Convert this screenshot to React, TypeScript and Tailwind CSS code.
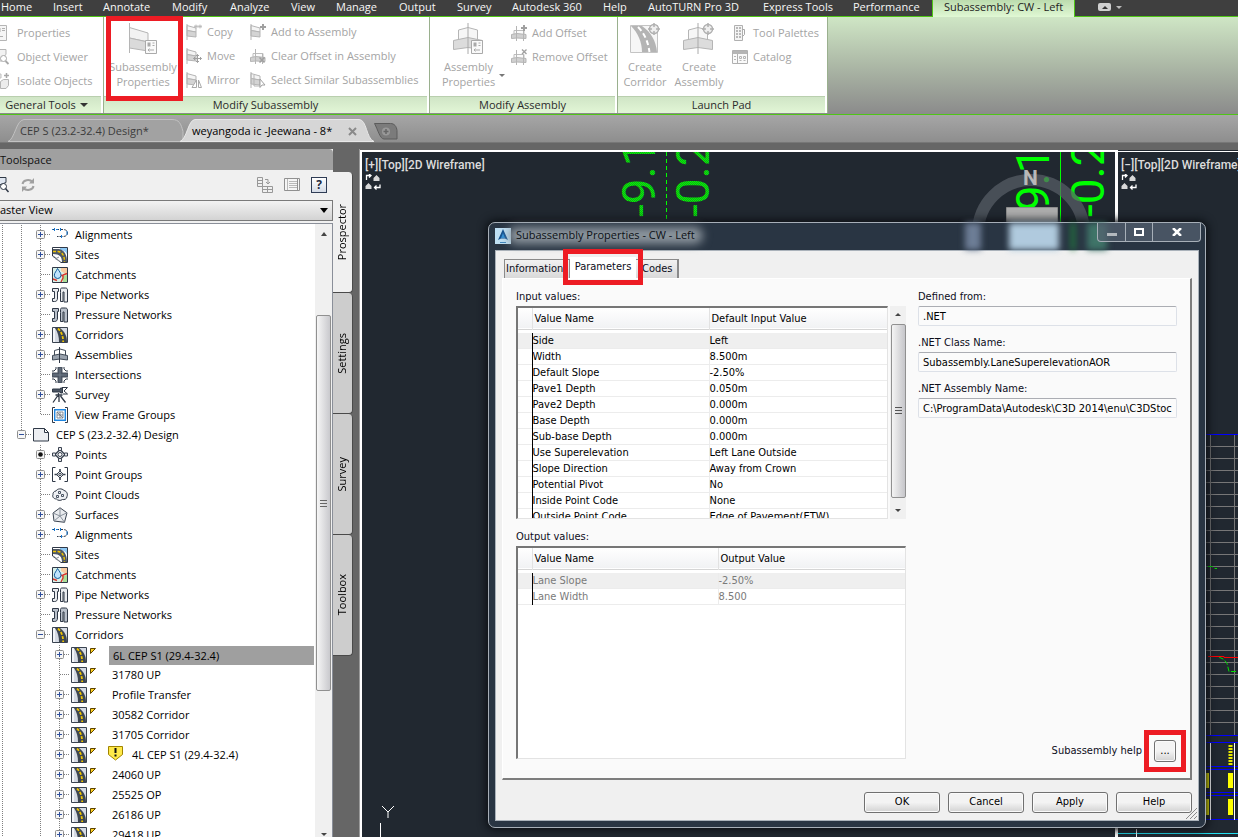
import type { ReactNode } from 'react';

const segoe = "font-['Open_Sans',sans-serif]";
const tahoma = "font-['DejaVu_Sans_Condensed','DejaVu_Sans',sans-serif]";

const menuItems = [
  { label: 'Home', width: 'w-[52px]' },
  { label: 'Insert', width: 'w-[50px]' },
  { label: 'Annotate', width: 'w-[69px]' },
  { label: 'Modify', width: 'w-[58px]' },
  { label: 'Analyze', width: 'w-[61px]' },
  { label: 'View', width: 'w-[45px]' },
  { label: 'Manage', width: 'w-[63px]' },
  { label: 'Output', width: 'w-[58px]' },
  { label: 'Survey', width: 'w-[55px]' },
  { label: 'Autodesk 360', width: 'w-[91px]' },
  { label: 'Help', width: 'w-[45px]' },
  { label: 'AutoTURN Pro 3D', width: 'w-[115px]' },
  { label: 'Express Tools', width: 'w-[90px]' },
  { label: 'Performance', width: 'w-[79px]' },
];

type IconName =
  | 'alignment' | 'site' | 'catchment' | 'pipe' | 'pressure' | 'corridor' | 'assembly' | 'intersection'
  | 'survey' | 'frame' | 'drawing' | 'point' | 'pointGroup' | 'cloud' | 'surface';

type Branch = 'line' | 'gap' | 'plus' | 'minus' | 'dot' | 'tee' | 'end';

type TreeItem = { label: string; icon: IconName; cells: Branch[]; flag?: boolean; warn?: boolean; selected?: boolean };

const treeItems: TreeItem[] = [
  { label: 'Alignments', icon: 'alignment', cells: ['line', 'line', 'plus'] },
  { label: 'Sites', icon: 'site', cells: ['line', 'line', 'plus'] },
  { label: 'Catchments', icon: 'catchment', cells: ['line', 'line', 'tee'] },
  { label: 'Pipe Networks', icon: 'pipe', cells: ['line', 'line', 'plus'] },
  { label: 'Pressure Networks', icon: 'pressure', cells: ['line', 'line', 'tee'] },
  { label: 'Corridors', icon: 'corridor', cells: ['line', 'line', 'plus'] },
  { label: 'Assemblies', icon: 'assembly', cells: ['line', 'line', 'plus'] },
  { label: 'Intersections', icon: 'intersection', cells: ['line', 'line', 'tee'] },
  { label: 'Survey', icon: 'survey', cells: ['line', 'line', 'plus'] },
  { label: 'View Frame Groups', icon: 'frame', cells: ['line', 'line', 'end'] },
  { label: 'CEP S (23.2-32.4) Design', icon: 'drawing', cells: ['line', 'minus'] },
  { label: 'Points', icon: 'point', cells: ['line', 'gap', 'dot'] },
  { label: 'Point Groups', icon: 'pointGroup', cells: ['line', 'gap', 'plus'] },
  { label: 'Point Clouds', icon: 'cloud', cells: ['line', 'gap', 'tee'] },
  { label: 'Surfaces', icon: 'surface', cells: ['line', 'gap', 'plus'] },
  { label: 'Alignments', icon: 'alignment', cells: ['line', 'gap', 'plus'] },
  { label: 'Sites', icon: 'site', cells: ['line', 'gap', 'tee'] },
  { label: 'Catchments', icon: 'catchment', cells: ['line', 'gap', 'tee'] },
  { label: 'Pipe Networks', icon: 'pipe', cells: ['line', 'gap', 'plus'] },
  { label: 'Pressure Networks', icon: 'pressure', cells: ['line', 'gap', 'tee'] },
  { label: 'Corridors', icon: 'corridor', cells: ['line', 'gap', 'minus'] },
  { label: '6L CEP S1 (29.4-32.4)', icon: 'corridor', cells: ['line', 'gap', 'line', 'plus'], flag: true, selected: true },
  { label: '31780 UP', icon: 'corridor', cells: ['line', 'gap', 'line', 'tee'], flag: true },
  { label: 'Profile Transfer', icon: 'corridor', cells: ['line', 'gap', 'line', 'plus'], flag: true },
  { label: '30582 Corridor', icon: 'corridor', cells: ['line', 'gap', 'line', 'plus'], flag: true },
  { label: '31705 Corridor', icon: 'corridor', cells: ['line', 'gap', 'line', 'plus'], flag: true },
  { label: '4L CEP S1 (29.4-32.4)', icon: 'corridor', cells: ['line', 'gap', 'line', 'plus'], flag: true, warn: true },
  { label: '24060 UP', icon: 'corridor', cells: ['line', 'gap', 'line', 'plus'], flag: true },
  { label: '25525 OP', icon: 'corridor', cells: ['line', 'gap', 'line', 'plus'], flag: true },
  { label: '26186 UP', icon: 'corridor', cells: ['line', 'gap', 'line', 'plus'], flag: true },
  { label: '29418 UP', icon: 'corridor', cells: ['line', 'gap', 'line', 'plus'], flag: true },
];

const inputValues = [
  ['Side', 'Left'],
  ['Width', '8.500m'],
  ['Default Slope', '-2.50%'],
  ['Pave1 Depth', '0.050m'],
  ['Pave2 Depth', '0.000m'],
  ['Base Depth', '0.000m'],
  ['Sub-base Depth', '0.000m'],
  ['Use Superelevation', 'Left Lane Outside'],
  ['Slope Direction', 'Away from Crown'],
  ['Potential Pivot', 'No'],
  ['Inside Point Code', 'None'],
  ['Outside Point Code', 'Edge of Pavement(ETW)'],
];

const outputValues = [
  ['Lane Slope', '-2.50%'],
  ['Lane Width', '8.500'],
];

function Svg({ size = 16, children }: { size?: number; children: ReactNode }) {
  return (
    <svg width={size} height={size} viewBox={`0 0 ${size} ${size}`} fill="none" className="shrink-0" aria-hidden="true">
      {children}
    </svg>
  );
}

/* ---------- tree icons ---------- */

const treeIcons: Record<IconName, ReactNode> = {
  alignment: (
    <>
      <path d="M0 2.500h11c3 0 4.500 1.500 4.500 3.500S14 9.500 11 9.500H5" stroke="#333c4a" strokeDasharray="3 1" />
      <path d="M2.500 1v3M8.500 1v3M15 4v4M9.500 8v3M0 2.500h1M4 2.500h2" stroke="#1478d4" />
    </>
  ),
  site: (
    <>
      <path d="M.5.5h15v15H9L.5 9z" fill="#fff" stroke="#2f3846" />
      <path d="M8 1h7v6c-2-3-4-4-7-4z" fill="#8fc9f5" />
      <path d="M1 2h6c5 1 8 5 8 13h-5c0-5-2-8-9-8z" fill="#4d5765" />
      <path d="M1 4.500h5c4.500.8 6.500 4 6.500 10.500" stroke="#f0c400" strokeWidth="1.500" strokeDasharray="3 1.500" />
      <path d="M1.500 9l7 6M3 12l4-2" stroke="#8a9098" />
    </>
  ),
  catchment: (
    <>
      <path d="M.5.5h15v15H.5z" fill="#d8f0e8" />
      <path d="M9 1h6v7l-6-4z" fill="#f7caa0" />
      <path d="M11 9l4-1v7h-4z" fill="#a9dd95" />
      <path d="M1 12l4 1.500M9 15l2-4V8l4-1.500M8 8l3 1" stroke="#d8372c" strokeWidth="1.400" />
      <path d="M5.500 1.500C7 4 9 6 9 8.200A3.300 3.300 0 0 1 5.700 11.500 3.300 3.300 0 0 1 2.300 8.200C2.300 6 4.500 4 5.500 1.500z" fill="#bfe3fb" stroke="#145a9c" />
      <path d="M.5.5h15v15H.5z" stroke="#2f3846" />
    </>
  ),
  pipe: (
    <>
      <path d="M.5 1.500h6v3h-1v6.500c0 2.500-1 3.500-3 3.500H.5v-3h2v-7h-2z" fill="#e9ebee" stroke="#2f3846" />
      <path d="M8.500 5.500v-3c0-1 .5-1.500 1.500-1.500h3.500c1.300 0 2 .8 2 2v12h-3.500v-10h-1v9.500H8.500z" fill="#e9ebee" stroke="#2f3846" />
    </>
  ),
  pressure: (
    <>
      <path d="M.5 1.500h6v3h-1v6.500c0 2.500-1 3.500-3 3.500H.5v-3h2v-7h-2z" fill="#b9c0ca" stroke="#2f3846" />
      <path d="M8.500 5.500v-3c0-1 .5-1.500 1.500-1.500h3.500c1.300 0 2 .8 2 2v12h-3.500v-10h-1v9.500H8.500z" fill="#b9c0ca" stroke="#2f3846" />
    </>
  ),
  corridor: (
    <>
      <path d="M.5.5h15v15H.5z" fill="#d5dae3" />
      <path d="M1 1h2v14H1z" fill="#f3f5f8" />
      <path d="M3 1h5c5 4 7 8 7 14H7c0-5-1-10-4-14z" fill="#3d4650" />
      <path d="M6 1.500c4 4 5 8 5.200 13.500" stroke="#f2c500" strokeWidth="1.800" strokeDasharray="3 1.500" />
      <path d="M.5.5h15v15H.5z" stroke="#3a4350" />
    </>
  ),
  assembly: (
    <>
      <path d="M2.500 3.500L8 2l5.500 1.500V9h-11z" fill="#fff" stroke="#414b58" />
      <path d="M.5 8.500L8 7l7.500 1.500v4.500L8 12 .5 13z" fill="#9aa3ae" stroke="#414b58" />
      <path d="M7.500 0v16" stroke="#2f3846" />
    </>
  ),
  intersection: (
    <>
      <path d="M5.500 0h5v5.500H16v5h-5.500V16h-5v-5.500H0v-5h5.500z" fill="#4b5563" />
      <path d="M8 1v14M1 8h14" stroke="#737e8c" />
      <path d="M4 0v2L2 4H0M12 0v2l2 2h2M4 16v-2l-2-2H0M12 16v-2l2-2h2" stroke="#2f3846" />
    </>
  ),
  survey: (
    <>
      <path d="M.5 2h8V1h2v5h-2V5h-8z" fill="#4b5563" stroke="#2f3846" />
      <path d="M10 .5h5.500L12 4l3.500 3H11" stroke="#2f3846" />
      <path d="M6.500 6v4M3.500 8h7M5.500 9L1 15.500M8.500 9l5 6.500M7 9v6" stroke="#2f3846" strokeWidth="1.300" />
    </>
  ),
  frame: (
    <>
      <path d="M3 .5H.5v15H3M13 .5h2.500v15H13" stroke="#2f3846" />
      <path d="M2.700 2.700h10.600v10.600H2.700z" fill="#fff" stroke="#1f86e0" strokeWidth="1.400" />
      <path d="M5 5h6v6H5zM5 5l6 6M8 5v6M5 8h6" stroke="#6b7480" strokeWidth=".8" />
    </>
  ),
  drawing: <path d="M.5 1.500h11l4 4v8.500H.5zM11.500 1.500v4h4" fill="#eceef2" stroke="#2f3846" />,
  point: (
    <>
      <path d="M8 2.500L13 7.500l-5 5-5-5z" fill="#e8eaee" stroke="#3a4350" strokeWidth="1.300" />
      <path d="M6.500.5h3v3h-3zM6.500 11.500h3v3h-3zM.5 6h3v3h-3zM12.500 6h3v3h-3z" fill="#e8eaee" stroke="#3a4350" />
      <circle cx="8" cy="7.500" r="2" fill="#fff" stroke="#3a4350" />
    </>
  ),
  pointGroup: (
    <>
      <path d="M3.500.5h-3v14h3M12.500.5h3v14h-3" stroke="#2f3846" />
      <path d="M8 4l3.500 3.500L8 11 4.500 7.500z" fill="#e8eaee" stroke="#3a4350" />
      <circle cx="8" cy="7.500" r="1.200" stroke="#3a4350" />
      <path d="M8 2v3M8 10v3M2.500 7.500h3M10.500 7.500h3" stroke="#3a4350" strokeWidth="1.600" />
    </>
  ),
  cloud: (
    <>
      <path d="M4 4c1-2.500 6-3 8-.5 3 .5 4 4 3 6 .2 2.500-3 3.500-4.500 3-2 1.500-5 1-6-.5-3 0-4.500-2.500-3.500-4.500-.3-1.500 1-3.500 3-3.500z" fill="#eef0f3" stroke="#2f3846" />
      <path d="M6.500 4.500h2v2h-2zM4.500 8.500h2v2h-2zM9.500 7.500h2v2h-2z" stroke="#4b5563" />
    </>
  ),
  surface: (
    <>
      <path d="M8 .8l7 5-2.500 9.500L2 14 1 6z" fill="#e9ebee" stroke="#3a4350" />
      <path d="M8 .8V9M1 6l7 3 7-3.200M2 14l6-5 4.500 6.300" stroke="#8a929c" />
    </>
  ),
};

function TreeIcon({ name }: { name: IconName }) {
  return <Svg>{treeIcons[name]}</Svg>;
}

function BranchCell({ type }: { type: Branch }) {
  const box = type === 'plus' || type === 'minus' || type === 'dot';
  const upper = type !== 'gap';
  const lower = upper && type !== 'end' && type !== 'minus';
  return (
    <svg width="19" height="20" viewBox="0 0 19 20" fill="none" className="shrink-0" aria-hidden="true">
      {upper && <path d="M9.5 0v10" stroke="#808080" strokeDasharray="1 1" />}
      {lower && <path d="M9.500 10v10" stroke="#808080" strokeDasharray="1 1" />}
      {upper && type !== 'line' && <path d="M10 9.500h9" stroke="#808080" strokeDasharray="1 1" />}
      {box && <rect x="5.500" y="5.500" width="8" height="8" rx="1" fill="#f6f6f6" stroke="#8e8e8e" />}
      {(type === 'plus' || type === 'minus') && <path d="M7 9.500h5" stroke="#2f4f9d" />}
      {type === 'plus' && <path d="M9.500 7v5" stroke="#2f4f9d" />}
      {type === 'dot' && <circle cx="9.500" cy="9.500" r="2.300" fill="#111" />}
    </svg>
  );
}

function TreeRow({ item }: { item: TreeItem }) {
  return (
    <li className="flex h-5 items-center">
      {item.cells.map((cell, i) => <BranchCell key={i} type={cell} />)}
      <span className="ml-[2px] flex"><TreeIcon name={item.icon} /></span>
      {item.flag && (
        <svg width="6" height="6" viewBox="0 0 6 6" className="mb-2 ml-[3px] mr-3 shrink-0" aria-hidden="true">
          <path d="M.5.5h5l-5 5z" fill="#ffd21f" stroke="#5d4300" />
        </svg>
      )}
      {item.warn && (
        <svg width="16" height="15" viewBox="0 0 16 15" className="mb-1 shrink-0 mr-1" aria-hidden="true">
          <path d="M.5.500h14v8l-7 5.500-7-5.500z" fill="#ffe94a" stroke="#a08400" />
          <path d="M7.500 2v5M7.500 8.500v2" stroke="#111" strokeWidth="2" />
        </svg>
      )}
      <span
        className={
          item.selected
            ? 'ml-px h-[19px] flex-1 bg-[#9f9f9f] pl-1 leading-[19px]'
            : item.flag ? 'pl-1 whitespace-nowrap' : 'pl-[7px] whitespace-nowrap'
        }
      >
        {item.label}
      </span>
    </li>
  );
}

/* ---------- ribbon icons ---------- */

const slab = 'M1 1.500l9 2.500v4L1 6.500z';
const slabLow = 'M1 6.500L10 8v5l-9-1z';

function SlabBase() {
  return (
    <>
      <path d={slab} fill="#f4f4f4" stroke="#b5b5b5" />
      <path d={slabLow} fill="#d4d4d4" stroke="#b5b5b5" />
      <path d="M1 0v16" stroke="#b5b5b5" />
    </>
  );
}

function CrossBase() {
  return (
    <>
      <path d="M3 5.500h10v4H3z" fill="#fafafa" stroke="#bdbdbd" />
      <path d="M.5 9.500L6 8.500l9 1v4l-9-.5-5.500.5z" fill="#d0d0d0" stroke="#b5b5b5" />
      <path d="M5.500 1v15M12.500 6v10" stroke="#b5b5b5" />
    </>
  );
}

const ribbonIcons: Record<string, ReactNode> = {
  properties: (
    <>
      <path d="M-3 .5h13.500v15H-3z" fill="#f6f6f6" stroke="#b5b5b5" />
      <path d="M1 3h3v4H1zM6 3.500h3M6 5.500h3M1 11.500h6M3 9.500l-2 2 2 2" stroke="#b0b0b0" fill="#c0c0c0" />
    </>
  ),
  viewer: (
    <>
      <path d="M-3 .5h13v5L6 9v3h-9z" fill="#f2f2f2" stroke="#b5b5b5" />
      <circle cx="7.500" cy="9.500" r="3" fill="#fff" stroke="#a8a8a8" />
      <path d="M9.500 12l3 3" stroke="#a8a8a8" strokeWidth="1.800" />
    </>
  ),
  isolate: (
    <>
      <path d="M-3 1h8v4h-8zM-3 7h5v6h-5z" fill="#ececec" stroke="#c0c0c0" />
      <path d="M4.500 8.500l3-2h5v6l-2.500 3H4.500z" fill="#ececec" stroke="#b5b5b5" />
      <path d="M10.500 0v5M8 2.500h5" stroke="#a8a8a8" strokeWidth="1.500" />
    </>
  ),
  copy: (
    <>
      <SlabBase />
      <path d="M8 2.500h4M10 .5v4M8.500 1l3 3M11.500 1l-3 3M12 2.500h4M14 .5v4M12.500 1l3 3M15.500 1l-3 3" stroke="#b8b8b8" strokeWidth=".8" />
    </>
  ),
  move: (
    <>
      <SlabBase />
      <path d="M11.500 6.500v8M7.500 10.500h8M10 8l1.500-1.500L13 8M10 13l1.500 1.500L13 13M9 9l-1.500 1.500L9 12M14 9l1.500 1.500L14 12" stroke="#a0a0a0" />
    </>
  ),
  mirror: (
    <>
      <SlabBase />
      <path d="M10.500 8v7.500H6zM12.500 8v7.500h3z" fill="#fff" stroke="#a8a8a8" />
    </>
  ),
  add: (
    <>
      <SlabBase />
      <path d="M13 0v6M10 3h6" stroke="#a0a0a0" strokeWidth="2" />
    </>
  ),
  clear: (
    <>
      <CrossBase />
      <path d="M9.500 9.500l5 5M14.500 9.500l-5 5" stroke="#a0a0a0" strokeWidth="1.600" />
    </>
  ),
  select: (
    <>
      <SlabBase />
      <path d="M4 3v11h7" stroke="#b5b5b5" />
      <path d="M10 7l5 6h-3l-2 2.500z" fill="#fff" stroke="#a0a0a0" />
    </>
  ),
  addOffset: (
    <>
      <CrossBase />
      <path d="M13 0v6M10 3h6" stroke="#a0a0a0" strokeWidth="2" />
    </>
  ),
  removeOffset: (
    <>
      <CrossBase />
      <path d="M11 .5l4.500 4.500M15.500.5L11 5" stroke="#a0a0a0" strokeWidth="1.400" />
    </>
  ),
  palettes: (
    <>
      <path d="M2.500.5h8v15h-8z" fill="#f4f4f4" stroke="#b0b0b0" />
      <path d="M4 3h5M4 6h5M4 9h5M4 12h5" stroke="#b8b8b8" strokeWidth="2" strokeDasharray="2 1" />
      <path d="M10.500 4.500h2v5l-2 2" stroke="#a8a8a8" />
    </>
  ),
  catalog: (
    <>
      <path d="M.5 1.500h15v13H.5z" fill="#fafafa" stroke="#b0b0b0" />
      <path d="M1 2h14v3H1z" fill="#b5b5b5" />
      <path d="M5.500 5v9" stroke="#b0b0b0" />
      <path d="M2 7.500h2M2 10.500h2M7.500 7.500h2v2h-2zM11.500 7.500h2v2h-2zM7.500 11.500h2M11.500 11.500h2" stroke="#b5b5b5" />
    </>
  ),
};

function ToolButton({ icon, label }: { icon: string; label: string }) {
  return (
    <button type="button" className="flex h-6 items-center gap-[5px] whitespace-nowrap">
      <Svg>{ribbonIcons[icon]}</Svg>
      {label}
    </button>
  );
}

function PropertyCard() {
  return (
    <>
      <path d="M18.500 17.500h11v13h-11z" fill="#fafafa" stroke="#aaa" />
      <path d="M20.500 19.500h3v4h-3z" fill="#aaa" />
      <path d="M25.500 20h2M25.500 22.500h2M21 27h6M22.500 25.500L21 27l1.500 1.500" stroke="#aaa" />
    </>
  );
}

function AssemblyShape() {
  return (
    <>
      <path d="M5.500 7L15 4.500 24.500 7v10L15 15.500 5.500 17z" fill="#f6f6f6" stroke="#b5b5b5" />
      <path d="M.5 17.500L15 14.500l14.500 3v9L15 24.500.5 26.500z" fill="#dcdcdc" stroke="#b5b5b5" />
      <path d="M15 0v31" stroke="#aaa" />
    </>
  );
}

const bigIcons: Record<string, ReactNode> = {
  subProps: (
    <>
      <path d="M2.500 4.500L21 10v9L2.500 15z" fill="#f2f2f2" stroke="#b5b5b5" />
      <path d="M2.500 15L21 19v9L2.500 25z" fill="#dadada" stroke="#b5b5b5" />
      <path d="M2.500 0v30" stroke="#b5b5b5" />
      <PropertyCard />
    </>
  ),
  asmProps: (
    <>
      <AssemblyShape />
      <PropertyCard />
    </>
  ),
  newCorridor: (
    <>
      <path d="M1.500 2.500h27v27h-27z" fill="#f6f6f6" stroke="#c4c4c4" />
      <path d="M2 3h11c9 6 14 15 15 26H13C13 19 9 10 2 3z" fill="#b4b4b4" />
      <path d="M9 4c7 7 10 15 11.500 25" stroke="#fff" strokeWidth="2" strokeDasharray="5 3" />
      <circle cx="25" cy="6" r="4.500" fill="#eee" stroke="#b0b0b0" strokeWidth="1.500" />
      <path d="M25 0v4M25 8v4M19 6h4M27 6h4" stroke="#b0b0b0" strokeWidth="1.500" />
    </>
  ),
  newAssembly: (
    <>
      <AssemblyShape />
      <circle cx="25" cy="6" r="4.500" fill="#eee" stroke="#b0b0b0" strokeWidth="1.500" />
      <path d="M25 0v4M25 8v4M19 6h4M27 6h4" stroke="#b0b0b0" strokeWidth="1.500" />
    </>
  ),
};

function BigButton({ icon, lines, width, menu }: { icon: string; lines: string[]; width: string; menu?: boolean }) {
  return (
    <button type="button" className={`${width} flex shrink-0 flex-col items-center pt-[3px] leading-[15px]`}>
      <svg width="32" height="32" viewBox="0 0 32 32" fill="none" className="mb-1" aria-hidden="true">{bigIcons[icon]}</svg>
      <span>{lines[0]}</span>
      <span className="relative">
        {lines[1]}
        {menu && <span className="absolute top-0 left-full ml-1 border-x-[3px] border-t-[3px] border-x-transparent border-t-[#777]" />}
      </span>
    </button>
  );
}

function RibbonPanel({ title, width, menu, children }: { title: string; width: string; menu?: boolean; children: ReactNode }) {
  return (
    <section className={`${width} flex shrink-0 flex-col border-r border-[#9ab08e] bg-white`}>
      <div className="flex h-[79px] pt-[3px] text-[#a4a4a4]">{children}</div>
      <h2 className={`${menu ? 'pr-2' : ''} mr-[2px] flex h-[17px] items-center justify-center gap-1 border-t border-[#b9cfae] bg-linear-to-b from-[#d0e5c6] to-[#e2f6d6] text-[#2b2b2b]`}>
        {title}
        {menu && <span className="border-x-4 border-t-4 border-x-transparent border-t-[#333]" />}
      </h2>
    </section>
  );
}

function Ribbon() {
  return (
    <div className="flex h-[98px] border-b border-[#4fc516] bg-linear-to-b from-[#cfe6c5] via-[#acb8a6] to-[#8b8b8b] pb-px">
      <RibbonPanel title="General Tools" width="w-[104px]" menu>
        <div className="-ml-1 pt-px">
          <ToolButton icon="properties" label="Properties" />
          <ToolButton icon="viewer" label="Object Viewer" />
          <ToolButton icon="isolate" label="Isolate Objects" />
        </div>
      </RibbonPanel>
      <RibbonPanel title="Modify Subassembly" width="w-[326px]">
        <div className="w-[78px] pl-[2px]">
          <BigButton icon="subProps" lines={['Subassembly', 'Properties']} width="w-[74px]" />
        </div>
        <div className="ml-1 w-16">
          <ToolButton icon="copy" label="Copy" />
          <ToolButton icon="move" label="Move" />
          <ToolButton icon="mirror" label="Mirror" />
        </div>
        <div>
          <ToolButton icon="add" label="Add to Assembly" />
          <ToolButton icon="clear" label="Clear Offset in Assembly" />
          <ToolButton icon="select" label="Select Similar Subassemblies" />
        </div>
      </RibbonPanel>
      <RibbonPanel title="Modify Assembly" width="w-[188px]">
        <BigButton icon="asmProps" lines={['Assembly', 'Properties']} width="w-[77px]" menu />
        <div className="ml-1 pt-px">
          <ToolButton icon="addOffset" label="Add Offset" />
          <ToolButton icon="removeOffset" label="Remove Offset" />
        </div>
      </RibbonPanel>
      <RibbonPanel title="Launch Pad" width="w-[210px]">
        <BigButton icon="newCorridor" lines={['Create', 'Corridor']} width="w-[54px]" />
        <BigButton icon="newAssembly" lines={['Create', 'Assembly']} width="w-[54px]" />
        <div className="ml-[6px] pt-px">
          <ToolButton icon="palettes" label="Tool Palettes" />
          <ToolButton icon="catalog" label="Catalog" />
        </div>
      </RibbonPanel>
    </div>
  );
}

function MenuBar() {
  return (
    <nav className="flex h-[17px] border-b border-[#4fc516] bg-[#3f3f3f] pl-px leading-[14px] text-[#f6f6f6]">
      {menuItems.map((item) => (
        <button key={item.label} type="button" className={`${item.width} h-[14px] shrink-0 text-left whitespace-nowrap`}>
          {item.label}
        </button>
      ))}
      <button type="button" className="-mb-px w-[143px] shrink-0 border-x border-[#4fc516] bg-linear-to-b from-[#bcdcae] to-[#e0f8d4] pb-[3px] text-[#222]">
        Subassembly: CW - Left
      </button>
      <button type="button" aria-label="Minimize ribbon" className="ml-[23px] flex h-[14px] items-center gap-[5px]">
        <span className="flex h-2 w-[13px] items-center justify-center rounded-xs bg-[#d0d0d0]">
          <span className="border-x-[3px] border-b-[3px] border-x-transparent border-b-[#333]" />
        </span>
        <span className="border-x-[3px] border-t-[3px] border-x-transparent border-t-[#bbb]" />
      </button>
    </nav>
  );
}

function DocumentTabs() {
  return (
    <div className="flex h-[28px] items-end border-b border-[#777] bg-linear-to-b from-[#a6a6a6] to-[#8e8e8e] pl-2">
      <button type="button" className="relative h-[23px] w-[172px] pt-px pl-3 text-left text-[#3c3c3c]">
        <svg width="176" height="23" viewBox="0 0 176 23" className="absolute top-0 left-0" aria-hidden="true">
          <path d="M0 22.500C7 20 8 1 16 .5h148c7 0 9 4 11 12v10z" fill="#a2a2a2" stroke="#c2c2c2" />
        </svg>
        <span className="relative">CEP S (23.2-32.4) Design*</span>
      </button>
      <button type="button" className="relative flex h-[23px] w-[192px] items-center gap-4 pt-px pl-3 text-black">
        <svg width="194" height="23" viewBox="0 0 194 23" className="absolute top-0 left-0" aria-hidden="true">
          <path d="M0 22.500C7 20 8 1 15 .5h164c8 0 7 19 15 22z" fill="#d6d6d6" stroke="#e8e8e8" />
        </svg>
        <span className="relative whitespace-nowrap">weyangoda ic -Jeewana - 8*</span>
        <svg width="9" height="9" viewBox="0 0 9 9" className="relative" aria-label="Close">
          <path d="M1 1l7 7M8 1L1 8" stroke="#8a8a8a" strokeWidth="2" />
        </svg>
      </button>
      <button type="button" aria-label="New drawing" className="ml-[2px] h-[21px]">
        <svg width="24" height="17" viewBox="0 0 24 17" fill="none" aria-hidden="true">
          <path d="M.5.500h16c4 0 6 3 6.500 7v8.500H10C6 16 4 7 .5.500z" fill="#7b7b7b" stroke="#5c5c5c" />
          <circle cx="12" cy="8.500" r="4" fill="#999" />
          <path d="M12 6v5M9.500 8.500h5" stroke="#666" strokeWidth="1.500" />
        </svg>
      </button>
    </div>
  );
}

const sideTabs = [
  { label: 'Prospector', style: 'bg-[#f0f0f0]' },
  { label: 'Settings', style: 'bg-[#cdcdcd]' },
  { label: 'Survey', style: 'bg-[#cdcdcd]' },
  { label: 'Toolbox', style: 'bg-[#cdcdcd]' },
];

function Toolspace() {
  return (
    <aside className="flex w-[353px] shrink-0">
      <div className="flex min-w-0 flex-1 flex-col bg-[#f0f0f0]">
        <h2 className="h-[21px] rounded-tr bg-[#a0a0a0] leading-[22px] text-[#111]">Toolspace</h2>
        <div className="flex h-[30px] items-center pr-[6px]">
          <button type="button" aria-label="Find">
            <Svg>
              <path d="M-2 .5h8v5l-8 3z" fill="#dfe6f0" stroke="#2f3846" />
              <circle cx="3.500" cy="9.500" r="3" fill="#fff" stroke="#2f3846" />
              <path d="M5.500 11.500l3 3.500" stroke="#2f3846" strokeWidth="1.500" />
            </Svg>
          </button>
          <button type="button" aria-label="Refresh" className="ml-1">
            <Svg>
              <path d="M2.500 7a5.500 4.500 0 0 1 10-2M13.500 9a5.500 4.500 0 0 1-10 2" stroke="#a0a0a0" strokeWidth="2" />
              <path d="M14 1v5.500H9zM2 15V9.500h5z" fill="#a0a0a0" />
            </Svg>
          </button>
          <div className="flex-1" />
          <button type="button" aria-label="Toggle tree">
            <Svg>
              <path d="M.5.500h5v9h-5zM.5 3.500h5M.5 6.500h5M5.500 9.500h10v6h-10zM5.500 12.500h10M10.500 9.500v6M8 2.500h3v4M9 5l2 2 2-2" stroke="#989898" />
            </Svg>
          </button>
          <button type="button" aria-label="Panorama" className="ml-[11px]">
            <Svg>
              <path d="M.5 1.500h15v12H.5z" fill="#f5f5f5" stroke="#909090" />
              <path d="M3.500 2v11M5 4.500h8M5 6.500h8M5 8.500h8M5 10.500h8" stroke="#b8b8b8" />
              <path d="M13.500 2v11" stroke="#909090" />
            </Svg>
          </button>
          <button type="button" className="ml-[11px] h-4 w-4 border border-[#2f3c55] bg-linear-to-b from-white to-[#d4dbe6] text-xs leading-[14px] font-bold text-[#1f2a40]">
            ?
          </button>
        </div>
        <div className="relative flex h-[21px] overflow-hidden border-y border-r border-[#7a7a7a] bg-linear-to-b from-[#f3f3f3] to-[#d3d3d3]">
          <select aria-label="View" className="-ml-[10px] flex-1 appearance-none bg-transparent text-black">
            <option>Master View</option>
          </select>
          <span className="pointer-events-none absolute top-[7px] right-1 border-x-4 border-t-[5px] border-x-transparent border-t-black" />
        </div>
        <div className="mt-[2px] flex min-h-0 flex-1 overflow-hidden border-t border-r border-[#8a8f99] bg-white">
          <ul className="-ml-[7px] min-w-0 flex-1 overflow-hidden pt-px text-black">
            {treeItems.map((item, i) => <TreeRow key={i} item={item} />)}
          </ul>
          <div className="ml-px flex w-[17px] flex-col items-center bg-[#f0f0f0]">
            <span className="mt-2 border-x-[3px] border-b-[4px] border-x-transparent border-b-[#444]" />
            <div className="mt-[79px] flex h-[376px] w-[15px] flex-col items-center justify-center gap-[2px] rounded-xs border border-[#909090] bg-linear-to-r from-[#f6f6f6] to-[#c9c9cd]">
              <span className="h-px w-[7px] bg-[#666]" />
              <span className="h-px w-[7px] bg-[#666]" />
              <span className="h-px w-[7px] bg-[#666]" />
            </div>
            <span className="mt-auto mb-px border-x-[3px] border-t-[3px] border-x-transparent border-t-[#444]" />
          </div>
        </div>
      </div>
      <div className="flex w-5 flex-col pt-[23px]">
        {sideTabs.map((tab) => (
          <button
            key={tab.label}
            type="button"
            className={`${tab.style} flex h-[121px] items-center justify-center rounded-r border-r border-b border-[#4a4a4a] text-black`}
          >
            <span className="rotate-180 [writing-mode:vertical-rl]">{tab.label}</span>
          </button>
        ))}
      </div>
    </aside>
  );
}

/* ---------- drawing area ---------- */

function ViewportLabel({ text }: { text: string }) {
  return (
    <div className="flex flex-col gap-px pt-[5px] pl-[3px]">
      <span className="font-['Roboto',sans-serif] text-[12px] leading-4 font-medium whitespace-nowrap text-[#dcdcdc]">{text}</span>
      <Svg>
        <path d="M1.500 6V1.500h4M4 0l2 1.500L4 3.500M15 10.500v3h-5M11.500 11.500l-2 2 2 2" stroke="#fff" strokeWidth="1.300" />
        <path d="M8.500 4L11.500 1l3 3v3h-6zM.5 12L3.500 9l3 3v3h-6z" fill="#d8d8d8" />
      </Svg>
    </div>
  );
}

function LeftViewport() {
  return (
    <div className="relative min-w-0 flex-1 overflow-hidden border-t-2 border-r-[3px] border-l-2 border-white">
      <svg width="100%" height="100%" fill="none" className="absolute inset-0" aria-hidden="true">
        <defs>
          <pattern id="mesh" width="2" height="2" patternUnits="userSpaceOnUse">
            <path d="M0 0h2v2H0z" fill="#14a01a" />
            <path d="M0 0h1v1H0zM1 1h1v1H1z" fill="#00ff00" />
          </pattern>
        </defs>
        <g fontSize="46" className="font-['Roboto',sans-serif]">
          <text transform="translate(293 65) rotate(-90)" fill="url(#mesh)">-9.1</text>
          <text transform="translate(347 65) rotate(-90)" fill="url(#mesh)">-0.2</text>
          <text transform="translate(687 72) rotate(-90)" fill="#00ff00">-9.1</text>
          <text transform="translate(742 65) rotate(-90)" fill="#00ff00">-0.2</text>
        </g>
        <path d="M304.500 0v71" stroke="#00ff00" strokeDasharray="4 3" />
        <path d="M698.500 0v71" stroke="#00ff00" />
        <circle cx="669" cy="81" r="53" stroke="#5a6068" strokeOpacity=".7" strokeWidth="12" />
        <path d="M644.500 55.500h51v20h-51z" fill="#adadad" stroke="#8d8d8d" />
        <text x="661" y="33" fill="#b8b8b8" fontSize="21" fontWeight="700" className="font-['Roboto',sans-serif]">N</text>
        <path d="M20 654l6 6 6-6M26 660v6M18.500 671v20" stroke="#fff" />
      </svg>
      <div className="relative"><ViewportLabel text="[+][Top][2D Wireframe]" /></div>
    </div>
  );
}

function RightViewport() {
  const gridRows = Array.from({ length: 24 }, (_, i) => 294 + i * 12);
  return (
    <div className="relative mt-px w-[120px] shrink-0 overflow-hidden border-t border-white">
      <svg width="100%" height="100%" fill="none" className="absolute inset-0" aria-hidden="true">
        {gridRows.map((y) => <path key={y} d={`M80 ${y + 0.5}h40`} stroke="#777" />)}
        <path d="M92.500 283v300M116.500 283v300" stroke="#777" />
        <path d="M80 282.500h40M80 583.500h40M80 590.500h40M80 614.500h40M80 617.500h40M80 640.500h40M80 643.500h40M80 667.500h40" stroke="#0000ff" />
        <path d="M92.500 591v77M116.500 591v77" stroke="#fff" />
        <path d="M90 414.500h4l3 2h2M94 504.500h6l6 3 3 4 2 8h9" stroke="#00e000" strokeDasharray="5 2" />
        <path d="M90 504.500h16v1h14" stroke="#ff0000" />
        <path d="M110 621h5v15h-5zM110 647h5v16h-5zM88 621h3v15h-3zM88 647h3v16h-3z" fill="#ffff00" />
        <path d="M112.500 593v21" stroke="#e6e600" strokeWidth="4" strokeDasharray="2 1" />
        <path d="M0 681.500h120" stroke="#22dff0" />
        <path d="M18.500 677v12" stroke="#fff" />
      </svg>
      <div className="relative"><ViewportLabel text="[−][Top][2D Wireframe]" /></div>
    </div>
  );
}

/* ---------- dialog ---------- */

function ValueTable({ headers, rows, nameWidth, dim }: { headers: string[]; rows: string[][]; nameWidth: string; dim?: boolean }) {
  return (
    <table className={`w-full table-fixed border-collapse text-left leading-[15px] ${dim ? 'text-[#7a7a7a]' : 'text-black'}`}>
      <thead className="text-black">
        <tr className="h-[21px] border-b border-[#d5d5d5] bg-linear-to-b from-white to-[#f1f2f4]">
          <th className="w-[14px] p-0" aria-label="Marker" />
          <th className={`${nameWidth} border-l border-[#e2e2e2] py-0 pr-0 pl-[2px] font-normal`}>{headers[0]}</th>
          <th className="border-l border-[#e2e2e2] py-0 pr-0 pl-[2px] font-normal">{headers[1]}</th>
        </tr>
      </thead>
      <tbody className="before:block before:h-[3px] before:content-['']">
        {rows.map((row, i) => (
          <tr key={row[0]} className={`h-4 border-b border-[#ececec] ${i === 0 ? 'bg-[#efefef]' : ''}`}>
            <td className="p-0" />
            <td className="border-l border-black p-0">{row[0]}</td>
            <td className="border-l border-[#ececec] p-0">{row[1]}</td>
          </tr>
        ))}
      </tbody>
    </table>
  );
}

function DialogField({ label, id, value }: { label: string; id: string; value: string }) {
  return (
    <div className="mb-[9px]">
      <label htmlFor={id} className="block h-[17px] leading-4">{label}</label>
      <input
        id={id}
        readOnly
        defaultValue={value}
        className="block h-5 w-full rounded-xs border border-[#dde1e8] border-t-[#abadb3] bg-[#fbfbfb] px-1 text-black"
      />
    </div>
  );
}

const pushButton = 'rounded-[3px] border border-[#707070] bg-linear-to-b from-[#f3f3f3] from-50% to-[#d2d2d2] text-black shadow-[inset_0_0_0_1px_#fafafa]';

function ParametersPage() {
  return (
    <div className="flex flex-1 flex-col border border-r-2 border-b-2 border-white border-r-[#7d7d7d] border-b-[#7d7d7d] bg-[#fafafa] pt-[10px] pr-[13px] pl-[13px]">
      <div className="flex flex-1 gap-3">
        <div className="w-[390px]">
          <h3 className="h-[17px] leading-4">Input values:</h3>
          <div className="flex gap-[2px]">
            <div className="h-[213px] flex-1 overflow-hidden border border-[#e3e3e3] border-t-2 border-l-2 border-t-[#767676] border-l-[#767676] bg-white">
              <ValueTable headers={['Value Name', 'Default Input Value']} rows={inputValues} nameWidth="w-[177px]" />
            </div>
            <div className="flex w-4 flex-col items-center justify-between bg-[#f0f0f0] py-[7px]">
              <span className="border-x-[3px] border-b-[3px] border-x-transparent border-b-[#444]" />
              <div className="mb-1 flex h-[174px] w-[15px] flex-col items-center justify-center gap-[2px] rounded-xs border border-[#909090] bg-linear-to-r from-[#f4f4f4] to-[#c6c6ca]">
                <span className="h-px w-[7px] bg-[#555]" />
                <span className="h-px w-[7px] bg-[#555]" />
                <span className="h-px w-[7px] bg-[#555]" />
              </div>
              <span className="border-x-[3px] border-t-[3px] border-x-transparent border-t-[#444]" />
            </div>
          </div>
          <h3 className="mt-[10px] h-[17px] leading-4">Output values:</h3>
          <div className="h-[213px] overflow-hidden border border-[#e3e3e3] border-t-2 border-l-2 border-t-[#767676] border-l-[#767676] bg-white">
            <ValueTable headers={['Value Name', 'Output Value']} rows={outputValues} nameWidth="w-[186px]" dim />
          </div>
        </div>
        <div className="flex flex-1 flex-col">
          <DialogField id="defined-from" label="Defined from:" value=".NET" />
          <DialogField id="class-name" label=".NET Class Name:" value="Subassembly.LaneSuperelevationAOR" />
          <DialogField id="assembly-name" label=".NET Assembly Name:" value="C:\ProgramData\Autodesk\C3D 2014\enu\C3DStockSubassemblies.dll" />
          <div className="mt-auto mb-4 flex items-center justify-end gap-3 pr-px">
            <span id="help-label">Subassembly help</span>
            <span className="relative flex">
              <button type="button" aria-labelledby="help-label" className={`${pushButton} h-[22px] w-[22px]`}>...</button>
              <span className="pointer-events-none absolute -inset-[10px] border-5 border-[#ed1c24]" />
            </span>
          </div>
        </div>
      </div>
    </div>
  );
}

function PropertiesDialog() {
  return (
    <div
      role="dialog"
      aria-label="Subassembly Properties - CW - Left"
      className={`absolute top-[72px] left-[128px] flex h-[606px] w-[718px] flex-col rounded-[7px] border border-[#a7afb8] bg-[#293543] px-[6px] pb-[6px] text-[11px] text-[#0d0d1a] shadow-[0_0_8px_2px_#0b0f14] ${tahoma}`}
    >
      <div className={`relative flex h-[27px] shrink-0 items-center gap-[5px] pb-[2px] ${segoe}`}>
        <div className="absolute inset-0 flex justify-end gap-3 overflow-hidden pr-[92px] blur-[3px]">
          <span className="h-full w-4 bg-[#6d7d96]" />
          <span className="ml-4 h-full w-[50px] bg-[#b0cade]" />
          <span className="h-full w-1 bg-[#1f7a3c]" />
          <span className="h-full w-5 bg-[#3f7468]" />
        </div>
        <Svg>
          <path d="M0 0h16v16H0z" fill="#bfe0f4" />
          <path d="M8 1l5 11-3-1.500H6L3 12z" fill="#0f4f8f" />
          <path d="M8 5l2 5H6z" fill="#2f8fd6" />
          <path d="M5 14.500h6" stroke="#3f86bd" />
        </Svg>
        <span className="relative whitespace-nowrap">
          <span className="absolute -inset-x-2 inset-y-0 rounded-full bg-[#8d969e] blur-[5px]" />
          <span className="relative text-[#0c1016]">Subassembly Properties - CW - Left</span>
        </span>
        <div className="relative -mr-[2px] ml-auto flex h-[19px] self-start rounded-b border border-t-0 border-[#a7afb8] bg-[#566370]/70 text-white">
          <button type="button" aria-label="Minimize" className="flex w-7 items-center justify-center border-r border-[#a7afb8]">
            <span className="mt-1 h-[3px] w-[10px] bg-[#b4b9be]" />
          </button>
          <button type="button" aria-label="Maximize" className="flex w-[27px] items-center justify-center border-r border-[#a7afb8]">
            <span className="h-2 w-[10px] border-2 border-white" />
          </button>
          <button type="button" aria-label="Close" className="flex w-[47px] items-center justify-center">
            <svg width="10" height="8" viewBox="0 0 10 8" aria-hidden="true">
              <path d="M1 0l8 8M9 0L1 8" stroke="#fff" strokeWidth="2.500" />
            </svg>
          </button>
        </div>
      </div>
      <div className="flex flex-1 flex-col border border-[#aab2ba] bg-[#f0f0f0] px-[6px] pt-[6px] pb-[7px]">
        <div role="tablist" className="flex h-[21px] items-end pl-[2px]">
          <button type="button" role="tab" className="h-[19px] w-[66px] border border-b-0 border-[#8a8a8a] bg-linear-to-b from-[#f2f2f2] to-[#d9d9d9] pl-px text-left whitespace-nowrap">Information</button>
          <button type="button" role="tab" aria-selected="true" className="relative h-[21px] w-[66px] bg-white">
            Parameters
            <span className="pointer-events-none absolute -inset-x-[7px] -top-[8px] -bottom-[7px] border-5 border-[#ed1c24]" />
          </button>
          <button type="button" role="tab" className="h-[19px] w-[43px] border-t border-r-2 border-[#8a8a8a] bg-linear-to-b from-[#f2f2f2] to-[#d9d9d9] pl-[6px] text-left">Codes</button>
        </div>
        <ParametersPage />
        <div className="mt-3 flex justify-end gap-2">
          {['OK', 'Cancel', 'Apply', 'Help'].map((label) => (
            <button key={label} type="button" className={`${pushButton} h-[21px] w-[76px]`}>{label}</button>
          ))}
        </div>
        <svg width="12" height="12" viewBox="0 0 12 12" className="absolute right-[8px] bottom-[8px]" aria-hidden="true">
          <path d="M1 12L12 1M5 12l7-7M9 12l3-3" stroke="#8a8a8a" />
        </svg>
      </div>
    </div>
  );
}

export default function App() {
  return (
    <div className={`relative flex h-screen flex-col overflow-hidden bg-[#666] text-[11px] ${segoe}`}>
      <MenuBar />
      <Ribbon />
      <DocumentTabs />
      <div className="mt-[6px] flex min-h-0 flex-1">
        <Toolspace />
        <div className="w-[7px] shrink-0 border-r border-[#9a9a9a]" />
        <main className="relative mt-px flex min-w-0 flex-1 bg-[#212830]">
          <LeftViewport />
          <RightViewport />
          <PropertiesDialog />
        </main>
      </div>
      <div className="pointer-events-none absolute top-4 left-[106px] h-[85px] w-[77px] border-5 border-[#ed1c24]" />
    </div>
  );
}
